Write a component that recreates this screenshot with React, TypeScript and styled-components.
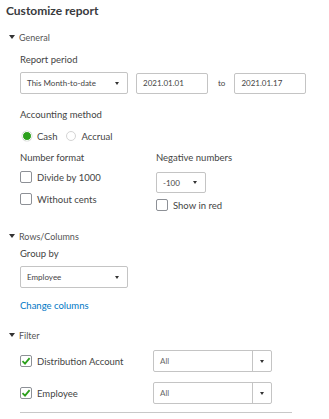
import type { FC, ReactNode } from 'react'
import styled, { createGlobalStyle } from 'styled-components'

const GlobalStyle = createGlobalStyle`
  html, body {
    margin: 0;
    padding: 0;
    background: #fff;
  }
  body {
    font-family: Lato, "Open Sans", sans-serif;
    color: #393a3d;
  }
`

const Section: FC<{ title: string; top: number; children: ReactNode }> = ({ title, top, children }) => (
  <SectionWrap>
    <SectionHeader $top={top}>
      <Caret />
      {title}
    </SectionHeader>
    <SectionBody>{children}</SectionBody>
  </SectionWrap>
)

const Check: FC<{ checked?: boolean; label: string; top?: number }> = ({ checked, label, top }) => (
  <CheckRow $top={top}>
    <CheckBox>
      {checked && (
        <svg width="10" height="10" viewBox="0 0 10 10">
          <path d="M1.5 5.2 L4 7.6 L8.6 2.2" fill="none" stroke="#2ca01c" strokeWidth="1.8" />
        </svg>
      )}
    </CheckBox>
    {label}
  </CheckRow>
)

const SelectBox: FC<{ value: string; width: number; height?: number; top?: number }> = ({
  value,
  width,
  height,
  top
}) => (
  <Select style={{ width }} $h={height} $top={top}>
    <span>{value}</span>
    <Arrow />
  </Select>
)

const FilterSelect: FC<{ value: string }> = ({ value }) => (
  <FilterBox>
    <FilterValue>{value}</FilterValue>
    <FilterBtn>
      <Arrow />
    </FilterBtn>
  </FilterBox>
)

const App: FC = () => (
  <>
    <GlobalStyle />
    <Page>
      <Title>Customize report</Title>

      <Section title="General" top={13}>
        <Label $top={11}>Report period</Label>
        <PeriodRow>
          <SelectBox value="This Month-to-date" width={108} />
          <DateInput>2021.01.01</DateInput>
          <ToText>to</ToText>
          <DateInput>2021.01.17</DateInput>
        </PeriodRow>

        <Label $top={15}>Accounting method</Label>
        <RadioRow>
          <Radio $on />
          <RadioLabel $gap={7}>Cash</RadioLabel>
          <Radio />
          <RadioLabel>Accrual</RadioLabel>
        </RadioRow>

        <Columns>
          <Column $w={136}>
            <Label $top={10}>Number format</Label>
            <Check label="Divide by 1000" top={7} />
            <Check label="Without cents" top={10} />
          </Column>
          <Column>
            <Label $top={10}>Negative numbers</Label>
            <SelectBox value="-100" width={50} height={21} top={8} />
            <Check label="Show in red" top={6} />
          </Column>
        </Columns>
      </Section>

      <Section title="Rows/Columns" top={19}>
        <Label $top={6}>Group by</Label>
        <SelectBox value="Employee" width={108} top={6} />
        <LinkText>Change columns</LinkText>
      </Section>

      <Section title="Filter" top={17}>
        <FilterRow $top={9}>
          <Check checked label="Distribution Account" top={0} />
          <FilterSelect value="All" />
        </FilterRow>
        <FilterRow $top={10}>
          <Check checked label="Employee" top={0} />
          <FilterSelect value="All" />
        </FilterRow>
        <Divider />
      </Section>
    </Page>
  </>
)

const Page = styled.div`
  width: 329px;
  height: 419px;
  overflow: hidden;
  padding: 4px 0 0 6px;
  box-sizing: border-box;
`

const Title = styled.div`
  font-size: 12px;
  font-weight: 700;
  color: #393a3d;
  height: 14px;
  line-height: 14px;
`

const SectionWrap = styled.div`
  display: flex;
  flex-direction: column;
`

const SectionHeader = styled.div<{ $top: number }>`
  display: flex;
  align-items: center;
  font-size: 9px;
  color: #555;
  height: 12px;
  margin-top: ${p => p.$top}px;
  padding-left: 3px;
`

const Caret = styled.span`
  width: 0;
  height: 0;
  border-left: 3.5px solid transparent;
  border-right: 3.5px solid transparent;
  border-top: 4px solid #333;
  margin-right: 4px;
`

const SectionBody = styled.div`
  display: flex;
  flex-direction: column;
  align-items: flex-start;
  padding-left: 14px;
`

const Label = styled.div<{ $top: number }>`
  font-size: 9.5px;
  color: #444;
  height: 12px;
  line-height: 12px;
  margin-top: ${p => p.$top}px;
`

const PeriodRow = styled.div`
  display: flex;
  align-items: center;
  margin-top: 6px;
`

const Select = styled.div<{ $h?: number; $top?: number }>`
  box-sizing: border-box;
  height: ${p => p.$h ?? 22}px;
  margin-top: ${p => p.$top ?? 0}px;
  border: 1px solid #c4c4c4;
  border-radius: 2px;
  display: flex;
  align-items: center;
  justify-content: space-between;
  padding: 0 8px 0 6px;
  font-size: 8px;
  color: #444;
`

const Arrow = styled.span`
  width: 0;
  height: 0;
  border-left: 2.5px solid transparent;
  border-right: 2.5px solid transparent;
  border-top: 3px solid #333;
`

const DateInput = styled.div`
  box-sizing: border-box;
  width: 72px;
  height: 21px;
  border: 1px solid #c4c4c4;
  border-radius: 2px;
  display: flex;
  align-items: center;
  padding-left: 6px;
  font-size: 8px;
  color: #444;
  margin-left: 8px;
`

const ToText = styled.span`
  font-size: 8px;
  color: #444;
  margin: 0 9px 0 10px;
  & + div {
    margin-left: 0;
  }
`

const RadioRow = styled.div`
  display: flex;
  align-items: center;
  margin-top: 9px;
  height: 12px;
`

const Radio = styled.span<{ $on?: boolean }>`
  box-sizing: border-box;
  width: 10px;
  height: 10px;
  border-radius: 50%;
  border: ${p => (p.$on ? '1.5px solid #fff' : '1px solid #d4d4d4')};
  background: ${p => (p.$on ? '#2ca01c' : '#fff')};
  box-shadow: ${p => (p.$on ? '0 0 0 0.5px #d8d8d8' : 'none')};
  margin-left: 2px;
`

const RadioLabel = styled.span<{ $gap?: number }>`
  font-size: 9.5px;
  color: #444;
  margin: 0 ${p => p.$gap ?? 4}px 0 5px;
`

const Columns = styled.div`
  display: flex;
  align-items: flex-start;
`

const Column = styled.div<{ $w?: number }>`
  display: flex;
  flex-direction: column;
  align-items: flex-start;
  width: ${p => (p.$w ? p.$w + 'px' : 'auto')};
`

const CheckRow = styled.div<{ $top?: number }>`
  display: flex;
  align-items: center;
  font-size: 9.5px;
  color: #444;
  margin-top: ${p => p.$top ?? 7}px;
  height: 12px;
`

const CheckBox = styled.span`
  box-sizing: border-box;
  width: 12px;
  height: 12px;
  border: 1px solid #8d9096;
  border-radius: 2px;
  display: flex;
  align-items: center;
  justify-content: center;
  margin-right: 5px;
  background: #fff;
`

const LinkText = styled.div`
  font-size: 9.5px;
  color: #0077c5;
  height: 12px;
  line-height: 12px;
  margin-top: 12px;
`

const FilterRow = styled.div<{ $top: number }>`
  display: flex;
  align-items: center;
  justify-content: space-between;
  width: 252px;
  margin-top: ${p => p.$top}px;
`

const FilterBox = styled.div`
  box-sizing: border-box;
  width: 119px;
  height: 22px;
  border: 1px solid #c4c4c4;
  border-radius: 2px;
  display: flex;
  align-items: stretch;
`

const FilterValue = styled.div`
  flex: 1;
  display: flex;
  align-items: center;
  padding-left: 6px;
  font-size: 8px;
  color: #666;
  border-right: 1px solid #c4c4c4;
`

const FilterBtn = styled.div`
  width: 18px;
  display: flex;
  align-items: center;
  justify-content: center;
`

const Divider = styled.div`
  width: 272px;
  height: 1px;
  background: #c8c8c8;
  margin-top: 8px;
`

export default App
